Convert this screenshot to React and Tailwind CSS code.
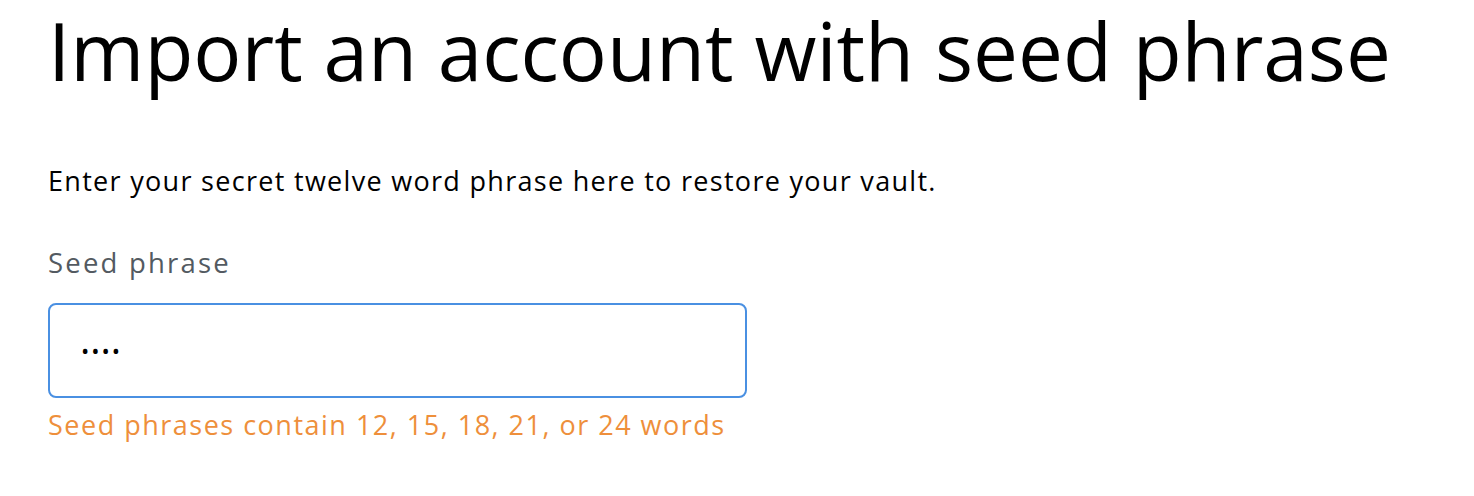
export default function App() {
  return (
    <div className="min-h-[496px] bg-white pl-[48px] pt-[2px] font-['Open_Sans',sans-serif] text-black">
      <h1 className="whitespace-nowrap text-[80px] leading-[96px] font-normal">
        Import an account with seed phrase
      </h1>
      <p className="mt-[68px] text-[27px] leading-[30px] tracking-[1.3px]">
        Enter your secret twelve word phrase here to restore your vault.
      </p>
      <label className="mt-[52px] block text-[27.5px] leading-[30px] tracking-[2.2px] text-[#535a61]">
        Seed phrase
      </label>
      <div className="mt-[25px] flex h-[95px] w-[699px] items-center rounded-[8px] border-2 border-[#4a90e2] px-[31px]">
        <span className="text-[22px] tracking-[2px]">••••</span>
      </div>
      <p className="mt-[12px] text-[27px] leading-[30px] tracking-[1.5px] text-[#ee8f3b]">
        Seed phrases contain 12, 15, 18, 21, or 24 words
      </p>
    </div>
  );
}
